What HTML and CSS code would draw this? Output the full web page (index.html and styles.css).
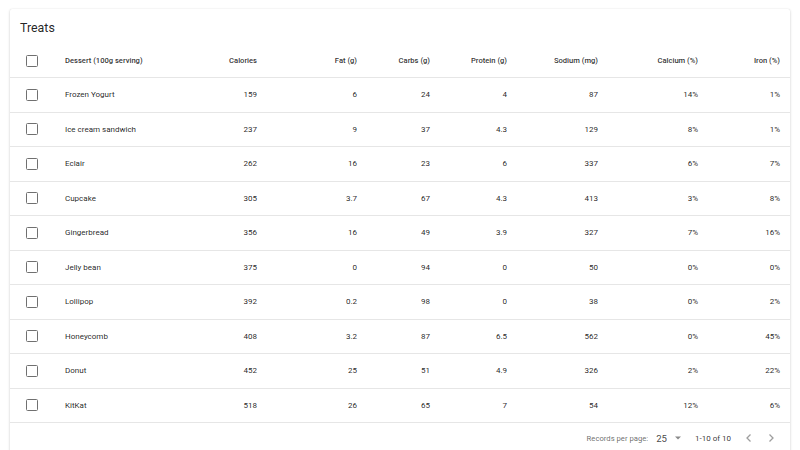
FILE: index.html
```html
<!DOCTYPE html>
<html>
<head>
<meta charset="utf-8">
<link rel="stylesheet" href="styles.css">
</head>
<body>
<div class="card">
  <div class="title">Treats</div>
  <div class="table">
    <div class="row head">
      <div class="cell cb"><span class="box"></span></div>
      <div class="cell name">Dessert (100g serving)</div>
      <div class="cell num">Calories</div>
      <div class="cell num">Fat (g)</div>
      <div class="cell num">Carbs (g)</div>
      <div class="cell num">Protein (g)</div>
      <div class="cell num">Sodium (mg)</div>
      <div class="cell num">Calcium (%)</div>
      <div class="cell num">Iron (%)</div>
    </div>
    <div class="row"><div class="cell cb"><span class="box"></span></div><div class="cell name">Frozen Yogurt</div><div class="cell num">159</div><div class="cell num">6</div><div class="cell num">24</div><div class="cell num">4</div><div class="cell num">87</div><div class="cell num">14%</div><div class="cell num">1%</div></div>
    <div class="row"><div class="cell cb"><span class="box"></span></div><div class="cell name">Ice cream sandwich</div><div class="cell num">237</div><div class="cell num">9</div><div class="cell num">37</div><div class="cell num">4.3</div><div class="cell num">129</div><div class="cell num">8%</div><div class="cell num">1%</div></div>
    <div class="row"><div class="cell cb"><span class="box"></span></div><div class="cell name">Eclair</div><div class="cell num">262</div><div class="cell num">16</div><div class="cell num">23</div><div class="cell num">6</div><div class="cell num">337</div><div class="cell num">6%</div><div class="cell num">7%</div></div>
    <div class="row"><div class="cell cb"><span class="box"></span></div><div class="cell name">Cupcake</div><div class="cell num">305</div><div class="cell num">3.7</div><div class="cell num">67</div><div class="cell num">4.3</div><div class="cell num">413</div><div class="cell num">3%</div><div class="cell num">8%</div></div>
    <div class="row"><div class="cell cb"><span class="box"></span></div><div class="cell name">Gingerbread</div><div class="cell num">356</div><div class="cell num">16</div><div class="cell num">49</div><div class="cell num">3.9</div><div class="cell num">327</div><div class="cell num">7%</div><div class="cell num">16%</div></div>
    <div class="row"><div class="cell cb"><span class="box"></span></div><div class="cell name">Jelly bean</div><div class="cell num">375</div><div class="cell num">0</div><div class="cell num">94</div><div class="cell num">0</div><div class="cell num">50</div><div class="cell num">0%</div><div class="cell num">0%</div></div>
    <div class="row"><div class="cell cb"><span class="box"></span></div><div class="cell name">Lollipop</div><div class="cell num">392</div><div class="cell num">0.2</div><div class="cell num">98</div><div class="cell num">0</div><div class="cell num">38</div><div class="cell num">0%</div><div class="cell num">2%</div></div>
    <div class="row"><div class="cell cb"><span class="box"></span></div><div class="cell name">Honeycomb</div><div class="cell num">408</div><div class="cell num">3.2</div><div class="cell num">87</div><div class="cell num">6.5</div><div class="cell num">562</div><div class="cell num">0%</div><div class="cell num">45%</div></div>
    <div class="row"><div class="cell cb"><span class="box"></span></div><div class="cell name">Donut</div><div class="cell num">452</div><div class="cell num">25</div><div class="cell num">51</div><div class="cell num">4.9</div><div class="cell num">326</div><div class="cell num">2%</div><div class="cell num">22%</div></div>
    <div class="row"><div class="cell cb"><span class="box"></span></div><div class="cell name">KitKat</div><div class="cell num">518</div><div class="cell num">26</div><div class="cell num">65</div><div class="cell num">7</div><div class="cell num">54</div><div class="cell num">12%</div><div class="cell num">6%</div></div>
  </div>
  <div class="footer">
    <span class="label">Records per page:</span>
    <span class="select">25<svg class="caret" width="6" height="4" viewBox="0 0 6 4"><path d="M0 0.5h6L3 3.5z" fill="#8a8a8a"/></svg></span>
    <span class="range">1-10 of 10</span>
    <svg class="chev" width="8" height="10" viewBox="0 0 8 10"><path d="M5.5 1.5L2 5l3.5 3.5" fill="none" stroke="#9e9e9e" stroke-width="1.3"/></svg>
    <svg class="chev" width="8" height="10" viewBox="0 0 8 10"><path d="M2.5 1.5L6 5 2.5 8.5" fill="none" stroke="#9e9e9e" stroke-width="1.3"/></svg>
  </div>
</div>
</body>
</html>
```
FILE: styles.css
```css
html, body {
  margin: 0;
  padding: 0;
  background: #fff;
  font-family: Roboto, "Liberation Sans", sans-serif;
  color: rgba(0,0,0,0.87);
}
.card {
  margin: 9px 10px 0 10px;
  background: #fff;
  box-shadow: 0 1px 3px rgba(0,0,0,0.18), 0 0 1px rgba(0,0,0,0.12);
  border-radius: 2px;
}
.title {
  height: 35px;
  padding-left: 10px;
  display: flex;
  align-items: center;
  font-size: 12.4px;
  padding-top: 1px;
  box-sizing: border-box;
}
.row {
  display: grid;
  grid-template-columns: 55px 135px 57px 100px 73px 77px 91px 100px 82px;
  height: 34.5px;
  border-bottom: 1px solid #e6e6e6;
  box-sizing: border-box;
  font-size: 8px;
}
.row.head {
  height: 34px;
  font-size: 7.6px;
  font-weight: 500;
  color: rgba(0,0,0,0.82);
}
.cell {
  display: flex;
  align-items: center;
  white-space: nowrap;
}
.cell.num {
  justify-content: flex-end;
}
.cell.cb {
  padding-left: 16px;
}
.box {
  width: 12px;
  height: 12px;
  box-sizing: border-box;
  border: 1.5px solid #707070;
  border-radius: 1.5px;
}
.footer {
  height: 30px;
  display: flex;
  align-items: center;
  justify-content: flex-end;
  padding-right: 15px;
  font-size: 8px;
  color: rgba(0,0,0,0.6);
}
.label {
  font-size: 7.7px;
  margin-right: 8px;
}
.select {
  display: flex;
  align-items: center;
  font-size: 9.6px;
  color: rgba(0,0,0,0.75);
  margin-right: 14px;
}
.caret {
  margin-left: 8px;
}
.range {
  margin-right: 6px;
  color: rgba(0,0,0,0.8);
}
.chev {
  margin-left: 8px;
}
.chev + .chev {
  margin-left: 14px;
}
```
